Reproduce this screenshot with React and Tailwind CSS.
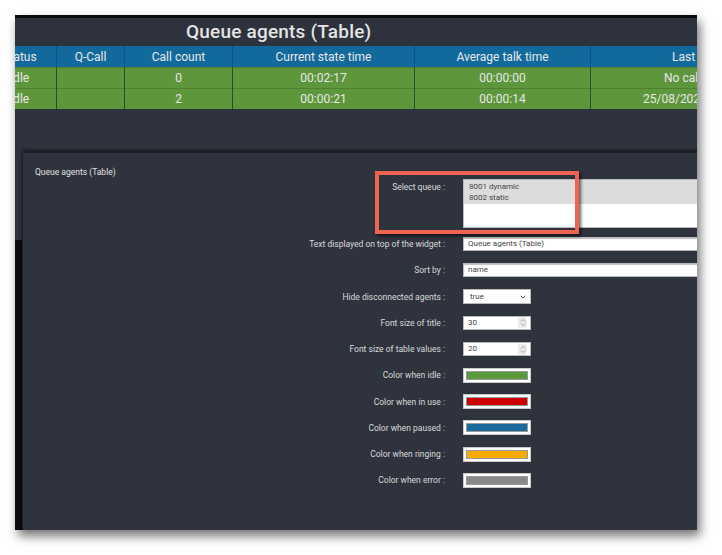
import React from "react";

const cols = [
  { w: 74, h: "Status", r: ["Idle", "Idle"] },
  { w: 68, h: "Q-Call", r: ["", ""] },
  { w: 108, h: "Call count", r: ["0", "2"] },
  { w: 182, h: "Current state time", r: ["00:02:17", "00:00:21"] },
  { w: 176, h: "Average talk time", r: ["00:00:00", "00:00:14"] },
];

function TextInput({ value, w = "w-[300px]" }) {
  return (
    <div className={`${w} shrink-0 h-[14px] bg-white border border-[#b9b9b9] shadow-[inset_0_1px_1px_rgba(0,0,0,0.25)] flex items-center pl-[4px] text-[8px] text-[#444] leading-none`}>
      {value}
    </div>
  );
}

function ColorBox({ color }) {
  return (
    <div className="w-[68px] h-[15px] bg-white border border-[#c9c9c9] p-[2px]">
      <div className="w-full h-full border border-[#9a9a9a]" style={{ backgroundColor: color }} />
    </div>
  );
}

function NumberInput({ value }) {
  return (
    <div className="w-[68px] h-[14px] bg-white border border-[#b9b9b9] flex items-center pl-[4px] pr-[3px] text-[8px] text-[#444] leading-none">
      <span className="flex-1">{value}</span>
      <div className="w-[9px] h-[11px] rounded-[2px] bg-[#ececec] flex items-center justify-center">
        <svg width="6" height="9" viewBox="0 0 6 9" fill="none" stroke="#999" strokeWidth="0.9">
          <path d="M1 3.5 L3 1.5 L5 3.5" />
          <path d="M1 5.5 L3 7.5 L5 5.5" />
        </svg>
      </div>
    </div>
  );
}

function Row({ label, children }) {
  return (
    <div className="flex items-center h-[14px]">
      <div className="w-[422px] shrink-0 text-right text-[8.5px] leading-[10px] text-[#d9d9d9] whitespace-nowrap">{label}</div>
      <div className="ml-[18px] shrink-0">{children}</div>
    </div>
  );
}

export default function App() {
  return (
    <div className="w-[722px] h-[555px] bg-white overflow-hidden pt-[15px] pl-[15px]" style={{ fontFamily: "Roboto, 'Liberation Sans', sans-serif" }}>
      <div className="relative w-[682px] h-[515px] bg-[#0b0b0c] overflow-hidden shadow-[3px_6px_10px_rgba(0,0,0,0.55)]">
        <div className="mt-[3px] h-[222px] bg-[#2e323c]">
          <div className="h-[28px] flex items-center pl-[171px] text-[19px] text-[#e4e4e4] font-medium tracking-[0.2px]">
            Queue agents (Table)
          </div>
          <div className="ml-[-32px] flex text-[12px] text-[#e8e8e8]">
            {cols.map((c, i) => (
              <div key={i} className="shrink-0 border-r border-[#2a4d2b]" style={{ width: c.w }}>
                <div className="h-[21px] bg-[#126a9c] border-r border-[#0c5580] flex items-center justify-center mr-[-1px]">{c.h}</div>
                {c.r.map((v, j) => (
                  <div key={j} className="h-[21px] bg-[#5e963b] border-t border-[#4e8030] flex items-center justify-center">{v}</div>
                ))}
              </div>
            ))}
            <div className="shrink-0 w-[220px]">
              <div className="h-[21px] bg-[#126a9c] flex items-center pl-[81px] whitespace-nowrap">Last call</div>
              <div className="h-[21px] bg-[#5e963b] border-t border-[#4e8030] flex items-center pl-[73px] whitespace-nowrap">No calls</div>
              <div className="h-[21px] bg-[#5e963b] border-t border-[#4e8030] flex items-center pl-[52px] whitespace-nowrap">25/08/2020 10:15:20</div>
            </div>
          </div>
        </div>

        <div className="absolute left-[7px] top-[137px] w-[700px] h-[400px] bg-[#2f333d] border border-[#1d1f25] shadow-[0_-2px_3px_rgba(0,0,0,0.5)]">
          <div className="pt-[14px] pl-[12px] text-[8.5px] leading-[10px] text-[#e0e0e0]">Queue agents (Table)</div>
          <div className="mt-[2px] flex flex-col">
            <div className="flex items-start">
              <div className="w-[422px] shrink-0 pt-[3px] text-right text-[8.5px] leading-[10px] text-[#d9d9d9]">Select queue :</div>
              <div className="ml-[18px] shrink-0 w-[300px] h-[49px] bg-white border border-[#b9b9b9] text-[8px] leading-[11px] text-[#444]">
                <div className="bg-[#dcdcdc] pt-[1px] pb-[1px] pl-[5px]">
                  <div>8001 dynamic</div>
                  <div>8002 static</div>
                </div>
              </div>
            </div>
            <div className="mt-[9px] flex flex-col gap-[12.25px]">
              <Row label="Text displayed on top of the widget :"><TextInput value="Queue agents (Table)" /></Row>
              <Row label="Sort by :"><TextInput value="name" /></Row>
              <Row label="Hide disconnected agents :">
                <div className="w-[68px] h-[15px] bg-white border border-[#b9b9b9] flex items-center pl-[6px] pr-[4px] text-[8px] text-[#444] leading-none">
                  <span className="flex-1">true</span>
                  <svg width="6" height="4" viewBox="0 0 6 4" fill="none" stroke="#555" strokeWidth="1">
                    <path d="M0.8 0.8 L3 3 L5.2 0.8" />
                  </svg>
                </div>
              </Row>
              <Row label="Font size of title :"><NumberInput value="30" /></Row>
              <Row label="Font size of table values :"><NumberInput value="20" /></Row>
              <Row label="Color when idle :"><ColorBox color="#5b9a3b" /></Row>
              <Row label="Color when in use :"><ColorBox color="#cc0000" /></Row>
              <Row label="Color when paused :"><ColorBox color="#1a6a9b" /></Row>
              <Row label="Color when ringing :"><ColorBox color="#f7ab00" /></Row>
              <Row label="Color when error :"><ColorBox color="#898989" /></Row>
            </div>
          </div>

          <div className="absolute left-[352px] top-[18px] w-[204px] h-[63px] border-[4px] border-[#ef6352] shadow-[2px_2px_3px_rgba(0,0,0,0.6)]" />
        </div>
      </div>
    </div>
  );
}
